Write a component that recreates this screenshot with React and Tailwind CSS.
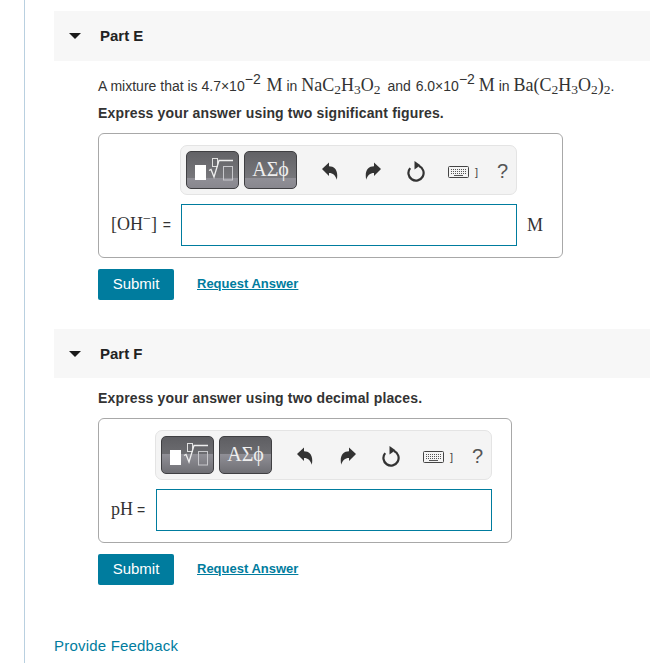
import React from 'react'

const serif = "font-['Liberation_Serif',serif]"

const PartHeader = ({ title, height }) => (
  <div className={`${height} bg-[#f7f7f7] flex items-center pl-[15px]`}>
    <span className="w-0 h-0 border-x-[6px] border-x-transparent border-t-[6px] border-t-[#1a1a1a]" />
    <span className="ml-[19px] text-[15px] font-bold text-[#222]">{title}</span>
  </div>
)

const TemplatesIcon = () => (
  <svg width="52" height="37" viewBox="0 0 52 37" className="absolute -left-px -top-px" fill="none">
    <rect x="9" y="14" width="11" height="15" fill="#fff" />
    <rect x="26.5" y="7.5" width="5" height="8" stroke="#e0e0e0" />
    <path d="M23 19.5 L25 18.5 L28 26 L33 9.5 H47" stroke="#eee" strokeWidth="1.3" />
    <rect x="37.5" y="15.5" width="9" height="13.5" stroke="#c8c8cc" />
  </svg>
)

const ReplyIcon = ({ flip }) => (
  <svg width="16" height="18" viewBox="0 0 16 18" className={flip ? 'scale-x-[-1]' : ''}>
    <path d="M0 7 L7 0.5 V4.2 C12.8 4.2 16.6 8.5 14.8 17.8 C13.6 13.4 11 11 7 11 V14 Z" fill="#333" />
  </svg>
)

const RefreshIcon = () => (
  <svg width="18" height="21" viewBox="0 0 18 21" fill="none">
    <path d="M12 5 A7.6 7.6 0 1 1 3.2 7.1" stroke="#333" strokeWidth="2.2" />
    <path d="M7.5 0 L13.5 4.3 L7.5 8.5 Z" fill="#333" />
  </svg>
)

const KeyboardIcon = () => (
  <svg width="21" height="12" viewBox="0 0 21 12" fill="none">
    <rect x="0.5" y="0.5" width="20" height="11" rx="1" fill="#f4f4f4" stroke="#444" />
    <path d="M3 3.5 H18 M3 5.5 H18 M3 7.5 H18" stroke="#555" strokeDasharray="1 1" />
    <path d="M6 9.5 H15" stroke="#555" />
  </svg>
)

const Toolbar = ({ band }) => (
  <div className="w-[337px] h-[50px] bg-[#f4f4f4] border border-[#e4e4e4] rounded-[7px] flex pl-[5px] pt-[5px]">
    <button className={`relative w-[53px] h-[38px] rounded-[5px] border border-[#3f3f42] ${band}`}>
      <TemplatesIcon />
    </button>
    <button className={`ml-[5px] w-[53px] h-[38px] pb-[2px] rounded-[5px] border border-[#3f3f42] text-[#eee] text-[20px] ${serif} ${band}`}>
      ΑΣϕ
    </button>
    <div className="flex items-center h-[38px] pt-[2px]">
      <span className="ml-[25px]"><ReplyIcon /></span>
      <span className="ml-[27px]"><ReplyIcon flip /></span>
      <span className="ml-[26px]"><RefreshIcon /></span>
      <span className="ml-[23px] pt-[2px]"><KeyboardIcon /></span>
      <span className="ml-[6px] pt-[2px] text-[11px] leading-none text-[#444]">]</span>
      <span className="ml-[19px] text-[20px] leading-none text-[#555]">?</span>
    </div>
  </div>
)

const Actions = () => (
  <div className="mt-[11px] flex items-start">
    <button className="w-[76px] h-[31px] bg-[#007c9e] rounded-[2px] text-white text-[15px]">Submit</button>
    <a className="ml-[23px] mt-[5px] text-[#007c9e] text-[13px] leading-[20px] font-bold underline">Request Answer</a>
  </div>
)

const AnswerBox = ({ width, toolbarPad, labelWidth, label, unit, band }) => (
  <div className={`mt-[10px] ${width} h-[125px] border border-[#a8a8a8] rounded-[6px] pt-[11px]`}>
    <div className={toolbarPad}>
      <Toolbar band={band} />
    </div>
    <div className="mt-[9px] flex items-center pl-[12px]">
      <div className={`${labelWidth} pb-[2px] text-[#333]`}>{label}</div>
      <div className="w-[336px] h-[42px] border border-[#007c9e] bg-white" />
      {unit && <span className={`ml-[10px] text-[18px] text-[#333] ${serif}`}>{unit}</span>}
    </div>
  </div>
)

export default function App() {
  return (
    <div className="w-[650px] h-[663px] overflow-hidden bg-white font-['Liberation_Sans',sans-serif] text-[14px] text-[#333]">
      <div className="ml-[24px] h-full border-l border-[#b9d0e0] pl-[29px] pt-[11px]">
        <PartHeader title="Part E" height="h-[50px]" />
        <div className="pl-[44px]">
          <p className="mt-[12px] h-[24px] leading-[24px] whitespace-nowrap">
            A mixture that is 4.7×10<sup className="text-[14px] -top-[7px]">−2</sup>{' '}
            <span className={`ml-[2px] text-[18px] ${serif}`}>M</span> in{' '}
            <span className={`text-[18px] ${serif}`}>NaC<sub>2</sub>H<sub>3</sub>O<sub>2</sub></span>
            <span className="ml-[3px]"> and</span> <span className="ml-[1px]">6.0×10</span>
            <sup className="text-[14px] -top-[7px]">−2</sup>{' '}
            <span className={`text-[18px] ${serif}`}>M</span> in{' '}
            <span className={`text-[18px] ${serif}`}>Ba(C<sub>2</sub>H<sub>3</sub>O<sub>2</sub>)<sub>2</sub></span>.
          </p>
          <p className="mt-[6px] h-[20px] leading-[20px] font-bold tracking-[0.15px]">Express your answer using two significant figures.</p>
          <AnswerBox
            width="w-[465px]"
            toolbarPad="pl-[81px]"
            labelWidth="w-[70px]"
            band="bg-[linear-gradient(#626266_0%,#77777b_72%,#908f96_73%,#88878e_100%)]"
            label={
              <span className="whitespace-nowrap">
                <span className={`text-[18px] ${serif}`}>[OH<sup className="text-[14px]">−</sup>]</span>
                <span className="ml-[2px]"> =</span>
              </span>
            }
            unit="M"
          />
          <Actions />
        </div>

        <div className="mt-[29px]">
          <PartHeader title="Part F" height="h-[49px] pt-[1px]" />
        </div>
        <div className="pl-[44px]">
          <p className="mt-[10px] h-[20px] leading-[20px] font-bold tracking-[0.15px]">Express your answer using two decimal places.</p>
          <AnswerBox
            width="w-[414px]"
            toolbarPad="pl-[56px]"
            labelWidth="w-[45px]"
            band="bg-[linear-gradient(#5e5e62_0%,#6c6c70_47%,#908f96_48%,#6f6f74_100%)]"
            label={
              <span className="whitespace-nowrap">
                <span className={`text-[18px] ${serif}`}>pH</span> =
              </span>
            }
          />
          <Actions />
        </div>
        <a className="block mt-[51px] h-[20px] leading-[20px] text-[#007c9e] text-[15px] tracking-[0.2px]">Provide Feedback</a>
      </div>
    </div>
  )
}
